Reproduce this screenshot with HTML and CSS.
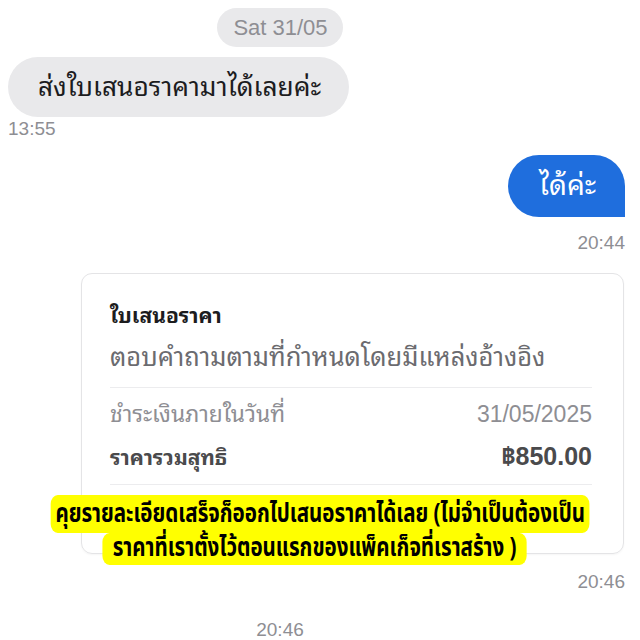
FILE: index.html
```html
<!DOCTYPE html>
<html lang="th">
<head>
<meta charset="utf-8">
<link rel="stylesheet" href="styles.css">
</head>
<body>
<div class="chat">
  <div class="center"><div class="day">Sat 31/05</div></div>
  <div class="in-bubble">ส่งใบเสนอราคามาได้เลยค่ะ</div>
  <div class="time left">13:55</div>
  <div class="out-row"><div class="out-bubble">ได้ค่ะ</div></div>
  <div class="time right t2044">20:44</div>
  <div class="card">
    <div class="card-title">ใบเสนอราคา</div>
    <div class="card-sub">ตอบคำถามตามที่กำหนดโดยมีแหล่งอ้างอิง</div>
    <div class="sep first"></div>
    <div class="row muted"><span>ชำระเงินภายในวันที่</span><span class="num">31/05/2025</span></div>
    <div class="row strong"><span>ราคารวมสุทธิ</span><span class="num amount">฿850.00</span></div>
    <div class="sep last"></div>
  </div>
  <div class="time right t2046">20:46</div>
  <div class="center"><div class="time bottom">20:46</div></div>
</div>
<div class="caption">
  <span class="cap-line one">คุยรายละเอียดเสร็จก็ออกไปเสนอราคาได้เลย (ไม่จำเป็นต้องเป็น</span>
  <span class="cap-line two">ราคาที่เราตั้งไว้ตอนแรกของแพ็คเก็จที่เราสร้าง )</span>
</div>
</body>
</html>
```
FILE: styles.css
```css
html, body {
  margin: 0;
  padding: 0;
  background: #ffffff;
}
body {
  font-family: "Liberation Sans", "Noto Sans Thai Looped", "Noto Sans Thai", sans-serif;
  width: 640px;
  height: 640px;
  overflow: hidden;
  position: relative;
}
.chat {
  display: flex;
  flex-direction: column;
  padding: 8px 15px 0 8px;
}
.center {
  display: flex;
  justify-content: center;
  padding-right: 73px;
}
.day {
  background: #e9e9eb;
  color: #8e8e93;
  font-size: 22px;
  height: 39px;
  line-height: 39px;
  padding: 0 15px 0 16px;
  border-radius: 20px;
}
.in-bubble {
  align-self: flex-start;
  margin-top: 10px;
  background: #e9e9eb;
  color: #1c1c1e;
  font-size: 26.3px;
  height: 60px;
  line-height: 60px;
  padding: 0 28px 0 30px;
  border-radius: 30px;
  box-sizing: border-box;
}
.time {
  color: #8e8e93;
  font-size: 19px;
  line-height: 22px;
}
.left {
  margin-top: 1px;
}
.right {
  align-self: flex-end;
}
.out-row {
  display: flex;
  justify-content: flex-end;
  margin-top: 15px;
}
.out-bubble {
  background: #1f6edd;
  color: #ffffff;
  font-size: 28px;
  height: 62px;
  line-height: 62px;
  padding: 0 29px 0 31px;
  border-radius: 31px 31px 0 31px;
}
.t2044 {
  margin-top: 15px;
}
.card {
  margin: 19px 1px 0 73px;
  border: 1px solid #e4e4e6;
  border-radius: 11px;
  height: 281px;
  box-sizing: border-box;
  padding: 27px 31px 0 28px;
  box-shadow: 0 1px 2px rgba(0,0,0,0.04);
}
.card-title {
  font-size: 21px;
  font-weight: 700;
  color: #1c1c1e;
  line-height: 30px;
}
.card-sub {
  font-size: 25.5px;
  color: #6b6b6f;
  line-height: 40px;
  margin-top: 6px;
}
.sep {
  height: 1px;
  background: #ececee;
}
.sep.first {
  margin-top: 10px;
}
.sep.last {
  margin-top: 11px;
}
.row {
  display: flex;
  justify-content: space-between;
  align-items: baseline;
  line-height: 30px;
}
.muted {
  color: #8e8e93;
  font-size: 22.8px;
  margin-top: 11px;
}
.muted .num {
  font-size: 23px;
}
.strong {
  color: #4a4a4c;
  font-size: 21px;
  font-weight: 700;
  margin-top: 12px;
}
.amount {
  font-size: 25px;
}
.t2046 {
  margin-top: 17px;
}
.bottom {
  margin-top: 26px;
}
.caption {
  position: absolute;
  left: 0;
  top: 495px;
  width: 640px;
  display: flex;
  flex-direction: column;
  align-items: center;
  font-family: "Noto Sans Thai", "Liberation Sans", sans-serif;
  font-weight: 700;
  font-size: 26px;
  color: #000;
}
.cap-line {
  display: block;
  background: #ffff00;
  white-space: nowrap;
  border-radius: 9px;
  transform: scaleX(0.79);
}
.cap-line.one {
  height: 38px;
  line-height: 38px;
  padding: 0 6px;
}
.cap-line.two {
  height: 32px;
  line-height: 30px;
  padding: 0 13px;
  margin-left: -10px;
}
```
